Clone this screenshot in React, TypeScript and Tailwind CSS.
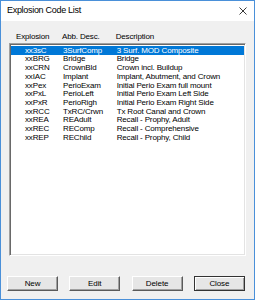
import React from "react";

const rows: [string, string, string][] = [
  ["xx3sC", "3SurfComp", "3 Surf. MOD Composite"],
  ["xxBRG", "Bridge", "Bridge"],
  ["xxCRN", "CrownBld", "Crown incl. Buildup"],
  ["xxIAC", "Implant", "Implant, Abutment, and Crown"],
  ["xxPex", "PerioExam", "Initial Perio Exam full mount"],
  ["xxPxL", "PerioLeft", "Initial Perio Exam Left Side"],
  ["xxPxR", "PerioRigh", "Initial Perio Exam Right Side"],
  ["xxRCC", "TxRC/Crwn", "Tx Root Canal and Crown"],
  ["xxREA", "REAdult", "Recall - Prophy, Adult"],
  ["xxREC", "REComp", "Recall - Comprehensive"],
  ["xxREP", "REChild", "Recall - Prophy, Child"],
];

function Btn({ label, def }: { label: string; def?: boolean }) {
  return (
    <div
      className={
        "w-[51px] h-[15px] flex items-center justify-center bg-[#e6e6e6] text-[8px] tracking-[-0.1px] text-black " +
        (def
          ? "border border-[#333333] shadow-[inset_1px_1px_0_#ffffff,inset_-1px_-1px_0_#a0a0a0]"
          : "border-t border-l border-t-[#ffffff] border-l-[#ffffff] border-r border-b border-r-[#5a5a5a] border-b-[#5a5a5a] shadow-[inset_-1px_-1px_0_#a0a0a0]")
      }
    >
      {label}
    </div>
  );
}

export default function App() {
  return (
    <div
      className="w-[255px] h-[300px] border border-[#4a90d9] flex flex-col bg-[#f0f0f0] text-black"
      style={{ fontFamily: '"Liberation Sans", Arial, sans-serif' }}
    >
      <div className="h-[20px] bg-white flex items-center justify-between pl-[6px] pr-[6px] shrink-0">
        <span className="text-[9px] tracking-[-0.3px]">Explosion Code List</span>
        <svg width="8" height="8" viewBox="0 0 8 8" className="mr-[1px]">
          <path d="M0.5 0.5 L7.5 7.5 M7.5 0.5 L0.5 7.5" stroke="#222" strokeWidth="0.9" fill="none" />
        </svg>
      </div>
      <div className="flex flex-col flex-1">
        <div className="h-[10px] mt-[11px] flex items-center text-[8px] tracking-[-0.15px] pl-[15px]">
          <div className="w-[46px]">Explosion</div>
          <div className="w-[53.7px]">Abb. Desc.</div>
          <div>Description</div>
        </div>
        <div className="ml-[8px] mt-[1px] w-[237px] h-[213px] bg-white border-t border-l border-t-[#a0a0a0] border-l-[#a0a0a0] border-r border-b border-r-[#ffffff] border-b-[#ffffff] shadow-[inset_1px_1px_0_#696969,inset_-1px_-1px_0_#e3e3e3] pt-[2.3px] pl-[1px] pr-[1px]">
          {rows.map((r, i) => (
            <div
              key={r[0]}
              className={
                "h-[8.73px] flex items-center text-[8px] tracking-[-0.15px] leading-none whitespace-nowrap " +
                (i === 0 ? "bg-[#0078d7] text-white" : "text-black")
              }
            >
              <div className="w-[52px] pl-[14px]">{r[0]}</div>
              <div className="w-[53.7px]">{r[1]}</div>
              <div>{r[2]}</div>
            </div>
          ))}
        </div>
        <div className="flex gap-[11.3px] pl-[6px] mt-[20px]">
          <Btn label="New" />
          <Btn label="Edit" />
          <Btn label="Delete" />
          <Btn label="Close" def />
        </div>
      </div>
    </div>
  );
}
